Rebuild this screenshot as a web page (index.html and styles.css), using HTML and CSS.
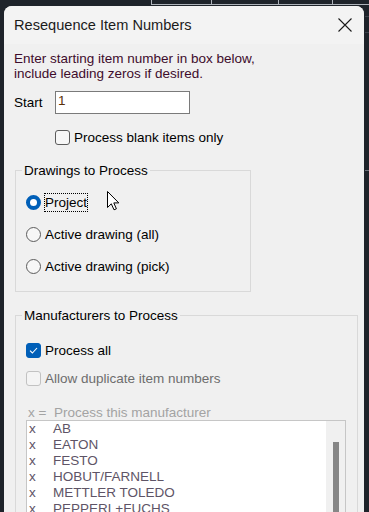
FILE: index.html
```html
<!doctype html>
<html>
<head>
<meta charset="UTF-8">
<title>Resequence Item Numbers</title>
<link rel="stylesheet" href="styles.css">
</head>
<body>
	<div class="cad">
		<span class="cell w1"></span><span class="cell w2"></span><span class="cell w3"></span><span class="cell w4"></span>
	</div>
	<div class="desk">
		<div class="gutter"></div>
		<div class="dialog">
			<div class="titlebar">
				<span class="title">Resequence Item Numbers</span>
				<svg class="close" width="14" height="14" viewBox="0 0 14 14"><path d="M0.5 0.5 L13.5 13.5 M13.5 0.5 L0.5 13.5" stroke="#1b1b1b" stroke-width="1.1" fill="none"/></svg>
			</div>
			<div class="content">
				<p class="intro">Enter starting item number in box below,<br>include leading zeros if desired.</p>
				<div class="start_row">
					<span class="start_label">Start</span>
					<div class="input">1</div>
				</div>
				<div class="check blank"><span class="box"></span>Process blank items only</div>

				<fieldset class="group drawings">
					<legend>Drawings to Process</legend>
					<div class="option"><span class="radio on"></span><span class="caption focus">Project</span></div>
					<div class="option"><span class="radio"></span><span class="caption">Active drawing (all)</span></div>
					<div class="option"><span class="radio"></span><span class="caption">Active drawing (pick)</span></div>
				</fieldset>

				<fieldset class="group makers">
					<legend>Manufacturers to Process</legend>
					<div class="check all"><span class="box on"><svg width="9" height="7" viewBox="0 0 9 7"><path d="M1 3.6 L3.4 6 L8 1" stroke="#ffffff" stroke-width="1.1" fill="none"/></svg></span>Process all</div>
					<div class="check dup disabled"><span class="box"></span>Allow duplicate item numbers</div>
					<div class="hint">x =  Process this manufacturer</div>
					<div class="listbox">
						<div class="rows">
							<div class="row"><span>x</span><span>AB</span></div>
							<div class="row"><span>x</span><span>EATON</span></div>
							<div class="row"><span>x</span><span>FESTO</span></div>
							<div class="row"><span>x</span><span>HOBUT/FARNELL</span></div>
							<div class="row"><span>x</span><span>METTLER TOLEDO</span></div>
							<div class="row"><span>x</span><span>PEPPERL+FUCHS</span></div>
						</div>
						<div class="scroll"><div class="thumb"></div></div>
					</div>
				</fieldset>
			</div>
		</div>
		<div class="side"></div>
	</div>
	<!-- mouse pointer over the dialog -->
	<svg class="cursor" width="13" height="20" viewBox="0 0 13 20"><path d="M0.5 0.5 L0.5 16.5 L4.3 12.8 L7 18.8 L9.4 17.8 L6.8 11.9 L11.8 11.9 Z" fill="#ffffff" stroke="#000000" stroke-width="1"/></svg>
</body>
</html>
```

FILE: styles.css
```css
* {
	box-sizing: border-box;
}
body {
	margin: 0;
	width: 369px;
	height: 512px;
	overflow: hidden;
	position: relative;
	background-color: #1e232a;
	font-family: "Liberation Sans", Arial, sans-serif;
	font-size: 13.5px;
	color: #000000;
}
.cad {
	display: flex;
	height: 6px;
	padding-left: 151px;
}
.cell {
	height: 5px;
	border-left: 1px solid #aeb3ba;
	border-bottom: 1px solid #aeb3ba;
}
.w1 { width: 60px; }
.w2 { width: 68px; }
.w3 { width: 54px; }
.w4 { width: 37px; }
.desk {
	display: flex;
}
.gutter {
	width: 4px;
}
.side {
	width: 5px;
	height: 506px;
	background: linear-gradient(#3b414a, #3b414a) 1px 10px / 4px 1px no-repeat,
		linear-gradient(#3b414a, #3b414a) 1px 26px / 4px 1px no-repeat,
		linear-gradient(#6b7079, #6b7079) 1px 164px / 4px 1px no-repeat;
}
.dialog {
	width: 360px;
	height: 506px;
	background-color: #f0f0f0;
	border-radius: 8px 8px 0 0;
	overflow: hidden;
}
.titlebar {
	height: 38px;
	background-color: #f3f3f3;
	display: flex;
	align-items: center;
	justify-content: space-between;
	padding: 0 12px 0 10px;
}
.title {
	font-size: 14.6px;
	color: #1b1b1b;
}
.close {
	display: block;
}
.content {
	padding: 7px 0 0 10px;
}
.intro {
	margin: 0;
	line-height: 15px;
	color: #3e0c2c;
}
.start_row {
	display: flex;
	align-items: center;
	margin-top: 10px;
}
.start_label {
	width: 41px;
	line-height: 15px;
}
.input {
	width: 135px;
	height: 23px;
	background-color: #ffffff;
	border: 1px solid #7a7a7a;
	padding: 1px 0 0 2px;
	line-height: 15px;
	color: #5a3008;
}
.check {
	display: flex;
	align-items: center;
	gap: 4px;
	height: 20px;
	line-height: 15px;
}
.blank {
	margin: 13px 0 0 41px;
}
.box {
	width: 15px;
	height: 15px;
	border: 1px solid #5c5c5c;
	border-radius: 3px;
	background-color: #f7f7f7;
	display: flex;
	align-items: center;
	justify-content: center;
}
.box.on {
	border-color: #005fb8;
	background-color: #005fb8;
}
.disabled {
	color: #6d6d6d;
}
.disabled .box {
	border-color: #c2c2c2;
	background-color: #f4f4f4;
}
.group {
	margin: 0 0 0 1px;
	border: 1px solid #d9d9d9;
	padding: 0 0 0 10px;
	min-width: 0;
}
.group legend {
	margin-left: -4px;
	padding: 0 2px;
	line-height: 15px;
}
.drawings {
	width: 236px;
	margin-top: 16px;
	padding-top: 14px;
	padding-bottom: 15px;
}
.option {
	display: flex;
	align-items: center;
	gap: 3px;
	height: 20px;
}
.option + .option {
	margin-top: 12px;
}
.radio {
	width: 15px;
	height: 15px;
	border: 1px solid #5c5c5c;
	border-radius: 50%;
	background-color: #f7f7f7;
}
.radio.on {
	border: 4.5px solid #005fb8;
	background-color: #ffffff;
}
.caption {
	border: 1px dotted transparent;
	line-height: 17px;
}
.caption.focus {
	border-color: #000000;
}
.makers {
	width: 343px;
	height: 240px;
	margin-top: 16px;
	padding-top: 17px;
}
.dup {
	margin-top: 8px;
}
.hint {
	margin: 17px 0 0 2px;
	line-height: 15px;
	color: #a3a3a3;
	white-space: pre;
}
.listbox {
	display: flex;
	width: 320px;
	height: 130px;
	background-color: #ffffff;
	border: 1px solid #c6c6c6;
	border-bottom: 0;
}
.rows {
	flex: 1;
	padding-left: 2px;
}
.row {
	display: grid;
	grid-template-columns: 24px 1fr;
	height: 16px;
	line-height: 16px;
	color: #5e5466;
}
.scroll {
	width: 19px;
	background-color: #f0f0f0;
	padding: 21px 0 0 7px;
}
.thumb {
	width: 6px;
	height: 120px;
	background-color: #868686;
}
.cursor {
	position: absolute;
	left: 107px;
	top: 191px;
}
```
